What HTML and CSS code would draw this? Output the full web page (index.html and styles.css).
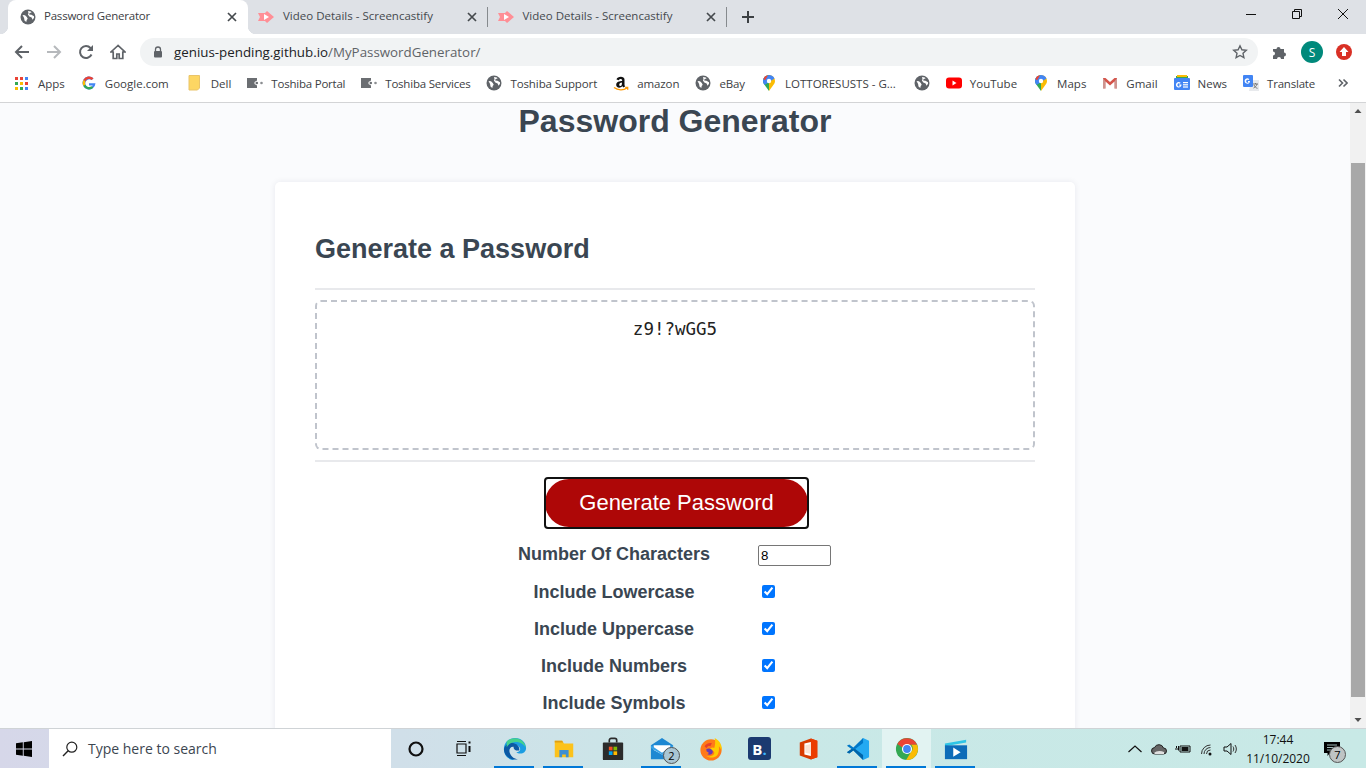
FILE: index.html
```html
<!DOCTYPE html>
<html lang="en">
<head>
<meta charset="utf-8">
<title>Password Generator</title>
<link rel="stylesheet" href="styles.css">
</head>
<body>
<svg class="defs" width="0" height="0">
  <symbol id="globe" viewBox="0 0 16 16"><circle cx="8" cy="8" r="7.5" fill="#5f6368"/><path d="M2.500 6l2.500.3 1.800 1.700.9 1.700-1 1.200-.4 2.200-1.800-1.700-.4-2.400zM8 2l2.800.4.800 1-2 .6-.4 1.400 2.300.4 2.500 1.400v1.500l-1.400 2-1-2.300-2.300-1-1.400-1.800.6-1.400z" fill="#fff"/></symbol>
  <symbol id="cast" viewBox="0 0 16 16"><path d="M0 4h7l2-2 7 6-7 6-2-2H0l2-4z" fill="#ff8f96"/><path d="M6 5l5 3-5 3z" fill="#fff"/></symbol>
  <symbol id="x" viewBox="0 0 10 10"><path d="M1 1l8 8M9 1L1 9" stroke="#45494d" stroke-width="1.700" fill="none"/></symbol>
  <symbol id="tosh" viewBox="0 0 16 16"><path d="M0 3h10v2.500L7.500 7v2l2.500 1.500V13H0z" fill="#6b6e72"/><circle cx="9.800" cy="8" r="1.300" fill="#6b6e72"/><circle cx="14.500" cy="8" r="1.300" fill="#8a8d90"/></symbol>
  <symbol id="pin" viewBox="0 0 16 16"><path d="M8 0a6 6 0 0 0-6 6c0 1.500.6 2.600 1.300 3.600L8 16z" fill="#34a853"/><path d="M8 0a6 6 0 0 1 6 6c0 1.500-.6 2.600-1.300 3.600L8 16z" fill="#fbbc04"/><path d="M8 0a6 6 0 0 1 5.500 3.500L3.500 10A6 6 0 0 1 3.500 2z" fill="#4285f4"/><path d="M3.700 1.800A6 6 0 0 1 7 .2L4.200 5.200 2.400 4z" fill="#ea4335"/><circle cx="8" cy="6" r="2.200" fill="#fff"/></symbol>
</svg>

<div class="screen">
  <header class="chrome">
    <div class="tabstrip">
      <div class="tab active">
        <svg class="ico16"><use href="#globe"/></svg>
        <span class="tab-title">Password Generator</span>
        <svg class="tab-x"><use href="#x"/></svg>
      </div>
      <div class="tab">
        <svg class="ico16"><use href="#cast"/></svg>
        <span class="tab-title">Video Details - Screencastify</span>
        <svg class="tab-x"><use href="#x"/></svg>
      </div>
      <div class="tab">
        <svg class="ico16"><use href="#cast"/></svg>
        <span class="tab-title">Video Details - Screencastify</span>
        <svg class="tab-x"><use href="#x"/></svg>
      </div>
      <svg class="newtab" viewBox="0 0 14 14"><path d="M7 1v12M1 7h12" stroke="#3c4043" stroke-width="2"/></svg>
      <div class="winctl">
        <svg viewBox="0 0 12 12"><path d="M1 6.500h10" stroke="#111" stroke-width="1"/></svg>
        <svg viewBox="0 0 12 12"><path d="M1.500 3.500h7v7h-7zM3.500 3.500v-2h7v7h-2" stroke="#111" stroke-width="1" fill="none"/></svg>
        <svg viewBox="0 0 12 12"><path d="M1 1l10 10M11 1L1 11" stroke="#111" stroke-width="1"/></svg>
      </div>
    </div>
    <div class="toolbar">
      <svg class="nav" viewBox="0 0 16 16"><path d="M15 8H2M8 2L2 8l6 6" stroke="#5f6368" stroke-width="2" fill="none"/></svg>
      <svg class="nav" viewBox="0 0 16 16"><path d="M1 8h13M8 2l6 6-6 6" stroke="#b6b9bc" stroke-width="2" fill="none"/></svg>
      <svg class="nav" viewBox="0 0 16 16"><path d="M13.500 10.500A6 6 0 1 1 12.500 4L14 5.500" stroke="#5f6368" stroke-width="2" fill="none"/><path d="M15 1v6H9z" fill="#5f6368"/></svg>
      <svg class="nav" viewBox="0 0 16 16"><path d="M8 1.500L1 8h2.200v6.500h3.600V10h2.400v4.500h3.600V8H15z" stroke="#5f6368" stroke-width="1.700" fill="none"/></svg>
      <div class="omnibox">
        <svg class="lock" viewBox="0 0 10 12"><path d="M2.500 5V3.500a2.500 2.500 0 0 1 5 0V5" stroke="#5f6368" stroke-width="1.300" fill="none"/><rect x="1" y="5" width="8" height="6.500" rx="1" fill="#5f6368"/></svg>
        <span class="url"><b>genius-pending.github.io</b>/MyPasswordGenerator/</span>
        <svg class="star" viewBox="0 0 16 16"><path d="M8 1.800l1.900 4 4.400.5-3.300 3 .9 4.400L8 11.500l-3.900 2.200.9-4.400-3.300-3 4.400-.5z" stroke="#5f6368" stroke-width="1.400" fill="none"/></svg>
      </div>
      <svg class="ext" viewBox="0 0 16 16"><path d="M1 5h3.500a2 2 0 1 1 4 0H12v3.500a2 2 0 1 1 0 4V15H9a2 2 0 1 0-4 0H1v-3.500a2 2 0 1 0 0-4z" fill="#5f6368"/></svg>
      <span class="avatar">S</span>
      <svg class="upload" viewBox="0 0 16 16"><circle cx="8" cy="8" r="8" fill="#d93025"/><path d="M8 3l4.500 5H10v4H6V8H3.500z" fill="#fff"/></svg>
    </div>
    <nav class="bookmarks">
      <span class="bm bm-apps"><svg class="ico13" viewBox="0 0 13 13"><g fill="#ea4335"><rect width="3" height="3"/><rect x="5" width="3" height="3"/></g><rect x="10" width="3" height="3" fill="#4285f4"/><rect y="5" width="3" height="3" fill="#34a853"/><rect x="5" y="5" width="3" height="3" fill="#fbbc04"/><rect x="10" y="5" width="3" height="3" fill="#ea4335"/><rect y="10" width="3" height="3" fill="#fbbc04"/><rect x="5" y="10" width="3" height="3" fill="#34a853"/><rect x="10" y="10" width="3" height="3" fill="#4285f4"/></svg>Apps</span>
      <span class="bm"><svg class="ico16" viewBox="0 0 16 16"><path d="M14.500 8.200H8v2.400h3.800A4 4 0 1 1 10.700 5l1.800-1.800A6.500 6.500 0 1 0 14.500 8.200z" fill="#4285f4"/><path d="M2.300 5a6.500 6.500 0 0 1 10.200-1.800L10.700 5a4 4 0 0 0-6.300 1.300z" fill="#ea4335"/><path d="M2.300 5l2.100 1.300a4 4 0 0 0 0 3.400L2.300 11a6.500 6.500 0 0 1 0-6z" fill="#fbbc04"/><path d="M2.300 11l2.100-1.300a4 4 0 0 0 6 1.600l2 1.500A6.500 6.500 0 0 1 2.300 11z" fill="#34a853"/></svg>Google.com</span>
      <span class="bm bm-dell"><svg class="ico16" viewBox="0 0 16 16"><path d="M2 .5h10.500v12.500l-2 2H2z" fill="#fdd663" stroke="#e9c46a"/></svg>Dell</span>
      <span class="bm bm-tight"><svg class="ico16"><use href="#tosh"/></svg>Toshiba Portal</span>
      <span class="bm bm-tight"><svg class="ico16"><use href="#tosh"/></svg>Toshiba Services</span>
      <span class="bm bm-snug"><svg class="ico16"><use href="#globe"/></svg>Toshiba Support</span>
      <span class="bm bm-snug"><svg class="ico16" viewBox="0 0 16 16"><path d="M3.500 4.500C4 1 11.500 .5 11.500 4.500v5c0 1 .3 1.300.7 1.700l-1.700 1.300-1-1.200c-2.500 2.300-6.500 1.500-6.300-1.500 0-3 3.300-3.800 6-3.800 .2-2.600-2.800-2.600-3.300-.7zM8.900 7.500c-2.800 0-3.500 3.600-1.500 3.500 1.500 0 1.600-2 1.500-3.500z" fill="#111" fill-rule="evenodd"/><path d="M1 12.500c4 3 9.500 3 13 .5M12.200 12.300h2.500v2.500" stroke="#f90" stroke-width="1.300" fill="none"/></svg>amazon</span>
      <span class="bm bm-snug"><svg class="ico16"><use href="#globe"/></svg>eBay</span>
      <span class="bm"><svg class="ico16"><use href="#pin"/></svg>LOTTORESUSTS - G...</span>
      <span class="bm bm-empty"><svg class="ico16"><use href="#globe"/></svg></span>
      <span class="bm"><svg class="ico16" viewBox="0 0 16 16"><rect y="2.500" width="16" height="11" rx="3" fill="#f00"/><path d="M6.500 5.500l4 2.500-4 2.500z" fill="#fff"/></svg>YouTube</span>
      <span class="bm"><svg class="ico16"><use href="#pin"/></svg>Maps</span>
      <span class="bm"><svg class="ico16" viewBox="0 0 16 16"><path d="M1 3h2.500L8 7l4.500-4H15v10.500h-2.500V6.500L8 10.500l-4.500-4v7H1z" fill="#d5544a"/><path d="M3.500 6.500v7H1V3zM12.500 6.500v7H15V3z" fill="#c8c8c8" opacity=".55"/></svg>Gmail</span>
      <span class="bm"><svg class="ico16" viewBox="0 0 16 16"><path d="M2 1h12v4H2z" fill="#34a853"/><path d="M3 0h10v2H3z" fill="#fbbc04"/><rect y="3" width="16" height="12" rx="1" fill="#4285f4"/><rect x="9" y="7" width="5" height="1.200" fill="#fff"/><rect x="9" y="9.200" width="5" height="1.200" fill="#fff"/><rect x="9" y="11.400" width="5" height="1.200" fill="#fff"/><path d="M7.500 9.500H5.200v1.200h1a1.500 1.500 0 1 1-.4-2l.9-.9a2.800 2.800 0 1 0 .8 1.700z" fill="#fff"/></svg>News</span>
      <span class="bm bm-tight"><svg class="ico16" viewBox="0 0 16 16"><path d="M8 5h8v11H6z" fill="#e8eaed"/><rect width="10" height="12" rx="1" fill="#4285f4"/><path d="M7 6H5v1.200h.8A1.500 1.500 0 1 1 5.500 5l.8-.8A2.700 2.700 0 1 0 7 6z" fill="#fff"/><path d="M10 9h5M12.500 8v1M14 9c-.5 2-2 3.500-3.500 4M11 10c.5 1.500 2 3 3.500 3.300" stroke="#777" fill="none"/></svg>Translate</span>
      <svg class="more" viewBox="0 0 10 10"><path d="M1 1.500L4.500 5 1 8.500M5.500 1.500L9 5 5.500 8.500" stroke="#5f6368" stroke-width="1.600" fill="none"/></svg>
    </nav>
  </header>

  <div class="viewport">
    <main class="page">
      <h1 class="page-title">Password Generator</h1>
      <section class="card">
        <h2 class="card-title">Generate a Password</h2>
        <div class="card-body">
          <textarea class="password" readonly>z9!?wGG5</textarea>
        </div>
        <div class="card-footer">
          <button class="generate" type="button">Generate Password</button>
          <div class="options">
            <label class="opt-label">Number Of Characters</label>
            <input class="opt-number" type="text" value="8">
            <label class="opt-label">Include Lowercase</label>
            <input class="opt-check" type="checkbox" checked>
            <label class="opt-label">Include Uppercase</label>
            <input class="opt-check" type="checkbox" checked>
            <label class="opt-label">Include Numbers</label>
            <input class="opt-check" type="checkbox" checked>
            <label class="opt-label">Include Symbols</label>
            <input class="opt-check" type="checkbox" checked>
          </div>
        </div>
      </section>
    </main>
    <div class="scrollbar">
      <svg class="arrow" viewBox="0 0 16 16"><path d="M4.500 10L8 6l3.500 4z" fill="#505050"/></svg>
      <div class="thumb"></div>
      <svg class="arrow" viewBox="0 0 16 16"><path d="M4.500 6L8 10l3.500-4z" fill="#505050"/></svg>
    </div>
  </div>

  <footer class="taskbar">
    <div class="start"><svg viewBox="0 0 16 16"><path d="M0 2.300L6.800 1.300V7.500H0zM7.700 1.200L16 0V7.500H7.700zM0 8.400H6.800V14.700L0 13.700zM7.700 8.400H16V16L7.700 14.800z" fill="#000"/></svg></div>
    <div class="searchbox">
      <svg viewBox="0 0 16 16"><circle cx="9.800" cy="6.200" r="5" stroke="#222" stroke-width="1.200" fill="none"/><path d="M6.200 9.800L1 15" stroke="#222" stroke-width="1.400"/></svg>
      <span>Type here to search</span>
    </div>
    <div class="tile"><svg class="i18" viewBox="0 0 18 18"><circle cx="9" cy="9" r="6.500" stroke="#111" stroke-width="2.200" fill="none"/></svg></div>
    <div class="tile tile-view"><svg class="i18" viewBox="0 0 18 18"><path d="M3 4h9v9H3zM3 1.500h9M3 15.500h9" stroke="#111" stroke-width="1.200" fill="none"/><path d="M15.500 1.500v2M15.500 6v6" stroke="#111" stroke-width="2"/></svg></div>
    <div class="tile tile-gap run"><svg class="i26" viewBox="0 0 26 26"><path d="M1 13C1 6 6.500 1 13 1c7 0 12 5 12 11 0 4-3 6-6 6-2 0-4-.800-4.500-1.500 3 0 4.500-2 4-4-.800-3-4-4.500-7-4-4 .8-6 4-5.500 8 .5 3 3 7 6.500 8.500C6 25 1 20 1 13z" fill="#1b9de2"/><path d="M1 13C2 8 7 5.500 11 6.500c5 1 7.500 5 6.500 8-3 1-6.500-1-6-4-4-.5-5.500 3.500-4 7 1.500 4 5.500 6.500 9 6.500C9 26 1 21 1 13z" fill="#0c59a4"/><path d="M4 5c4-5 15-5 19 2 1.500 2.500 2 5 2 5-2-4-7-7-12-6.500C9 6 6 7.500 4 11z" fill="#45d18d"/></svg></div>
    <div class="tile run"><svg class="i26" viewBox="0 0 26 26"><path d="M3 4h8l2 3h10v15H3z" fill="#fcc21b"/><path d="M3 4h8l1 2H3z" fill="#e09f13"/><path d="M8 14h10v8h-3v-3h-4v3H8z" fill="#3f8fd2"/></svg></div>
    <div class="tile"><svg class="i26" viewBox="0 0 26 26"><path d="M9 6V3.500C9 2 10 1.500 11 1.500h4c1 0 2 .5 2 2V6" stroke="#2b2b2b" stroke-width="1.800" fill="none"/><rect x="2" y="6" width="22" height="19" rx="1" fill="#2b2b2b"/><rect x="8.500" y="10.500" width="4" height="4" fill="#f25022"/><rect x="13.500" y="10.500" width="4" height="4" fill="#7fba00"/><rect x="8.500" y="15.500" width="4" height="4" fill="#00a4ef"/><rect x="13.500" y="15.500" width="4" height="4" fill="#ffb900"/></svg></div>
    <div class="tile run"><svg class="i26" viewBox="0 0 26 26"><path d="M1 9L13 1l12 8v15H1z" fill="#1e88d2"/><path d="M4 9h18v5l-9 5-9-5z" fill="#fff"/><path d="M1 9l12 8 12-8v3l-12 7-12-7z" fill="#37a2e6"/></svg><span class="badge">2</span></div>
    <div class="tile"><svg class="i26" viewBox="0 0 26 26"><circle cx="13" cy="14" r="11.500" fill="#ff7a18"/><path d="M17 1c6 3 8.500 9 7.500 14-1-3-3-5-3-5s1 7-2 10-9 3-12 0c3 2 8 1 9-2s-3-4-5-4c1-3 4-3 5-2 1-3 1.500-7 .5-11z" fill="#ffcb00"/><path d="M6 10c2-3 6-4 8-3-1 1-1.500 2-1.500 3-2-.5-3.500 0-4 2-1-.5-2-1-2.500-2z" fill="#e8402a"/><path d="M8 13c3-1.500 7 0 7 3s-4 4-6 2.500c2 0 2-2 0-2.500-1-.3-1-1.500-1-3z" fill="#6a3ab0"/></svg></div>
    <div class="tile"><span class="booking">B<i>.</i></span></div>
    <div class="tile"><svg class="i26" viewBox="0 0 26 26"><path d="M3 6L15 1.500 22 4v18l-7 2.500L3 20z" fill="#d83b01"/><path d="M15 1.500L22 4v18l-7 2.500z" fill="#eb3c00"/><path d="M8 7l7-1.500v15L8 19z" fill="#fff"/><path d="M9 9l6-1.500v11L9 17z" fill="#fbe3d6"/></svg></div>
    <div class="tile run"><svg class="i26" viewBox="0 0 26 26"><path d="M18.500 1L25 4v18l-6.500 3L8 14.500z" fill="#23a9f2"/><path d="M18.500 1L8 11.500 3.500 8 1 9.500 6 13l-5 3.500L3.500 18 18.500 6.500z" fill="#0078c8"/><path d="M1 16.500L3.500 18 8 14.500 18.500 25V19.500L10 13 6 13z" fill="#0065a9"/></svg></div>
    <div class="tile run tile-active"><svg class="i26" viewBox="0 0 26 26"><circle cx="13" cy="13" r="12" fill="#34a853"/><path d="M2.500 7.500A12 12 0 0 1 24 8.500H13a5 5 0 0 0-5 3z" fill="#ea4335"/><path d="M24 8.500A12 12 0 0 1 12 25l5.500-9a5 5 0 0 0 0-7.500z" fill="#fbbc04"/><circle cx="13" cy="13" r="5.500" fill="#fff"/><circle cx="13" cy="13" r="4.200" fill="#4285f4"/></svg></div>
    <div class="tile run"><svg class="i26" viewBox="0 0 26 26"><path d="M1 7l23-4v3L1 10z" fill="#2ec5e6"/><path d="M1 9h24v15H1z" fill="#0d6cb8"/><path d="M10 11.500l8 5-8 5z" fill="#fff"/></svg></div>
    <div class="tray">
      <svg class="t16" viewBox="0 0 16 16"><path d="M1.500 11L8 5l6.500 6" stroke="#111" stroke-width="1.200" fill="none"/></svg>
      <svg class="t16" viewBox="0 0 16 16"><path d="M4 13a3.200 3.200 0 0 1-.5-6.400A4.800 4.800 0 0 1 12.500 7 3 3 0 0 1 12.500 13z" fill="#666" stroke="#222"/><path d="M3 12c2-2 6-3 10-1v2H4z" fill="#e0e0e0"/></svg>
      <svg class="t16" viewBox="0 0 16 16"><path d="M5 5h10v6H5zM0 8h3M1.500 5v2M3.500 5v2" stroke="#111" fill="none"/><rect x="3" y="6.500" width="1" height="3" fill="#111"/><rect x="6.500" y="6" width="7" height="4" fill="#111"/></svg>
      <svg class="t16" viewBox="0 0 16 16"><circle cx="11" cy="13" r="1.500" fill="#111"/><path d="M7.500 13a4 4 0 0 1 4-4M5 13a6.500 6.500 0 0 1 6.500-6.500M2.500 13a9 9 0 0 1 9-9" stroke="#333" fill="none"/></svg>
      <svg class="t16" viewBox="0 0 16 16"><path d="M1 6h3l4-3.500v11L4 10H1z" stroke="#111" fill="none"/><path d="M10 5.500c1 1.500 1 3.500 0 5M12 4c1.800 2.500 1.800 5.500 0 8" stroke="#333" fill="none"/></svg>
    </div>
    <div class="clock"><span>17:44</span><span>11/10/2020</span></div>
    <div class="notify"><svg viewBox="0 0 16 16"><path d="M0 1h16v11H6l-2.500 3v-3H0z" fill="#000"/><path d="M3 4h10M3 6.500h10M3 9h7" stroke="#c9e9e6" stroke-width=".8"/></svg><span class="badge badge-grey">7</span></div>
  </footer>
</div>
</body>
</html>
```

FILE: styles.css
```css
* { box-sizing: border-box; }
html, body { margin: 0; height: 100%; overflow: hidden; }
body { font-family: "Liberation Sans", Arial, sans-serif; }
.defs { position: absolute; }
.screen { width: 1366px; height: 768px; display: flex; flex-direction: column; }

/* browser frame */
.chrome { flex: none; height: 103px; display: flex; flex-direction: column; background: #fff; border-bottom: 1px solid #d3d4d6; font-family: "Open Sans", "Noto Sans", sans-serif; }
.tabstrip { height: 34px; background: #dee1e6; display: flex; align-items: center; padding-left: 8px; }
.tab { position: relative; width: 239.500px; height: 34px; display: flex; align-items: center; padding: 0 10px 0 12px; gap: 8px; }
.tab + .tab::before { content: ""; position: absolute; right: 0; top: 7px; height: 20px; width: 1px; background: #868a8e; }
.tab.active { background: #fff; border-radius: 8px 8px 0 0; width: 240px; }
.tab.active::before, .tab.active::after { content: ""; position: absolute; bottom: 0; width: 8px; height: 8px; }
.tab.active::before { left: -8px; background: radial-gradient(circle at 0 0, #dee1e6 8px, #fff 8.500px); }
.tab.active::after { right: -8px; background: radial-gradient(circle at 100% 0, #dee1e6 8px, #fff 8.500px); z-index: 1; }
.tab-title { flex: 1; font-size: 11.500px; line-height: 14px; margin-bottom: 2px; color: #3c4043; white-space: nowrap; overflow: hidden; }
.tab.active .tab-title { letter-spacing: -.22px; }
.tab:not(.active) { padding-left: 10px; padding-right: 10px; }
.tab:not(.active) .tab-title { color: #45494e; padding-left: 1px; }
.ico16 { width: 16px; height: 16px; flex: none; }
.ico13 { width: 13px; height: 13px; flex: none; }
.tab-x { width: 10px; height: 10px; flex: none; margin-right: 1px; }
.newtab { width: 14px; height: 14px; margin-left: 14px; }
.winctl { margin-left: auto; display: flex; align-items: center; margin-top: -6px; }
.winctl svg { width: 12px; height: 12px; margin: 0 17px; display: block; }

.toolbar { height: 32px; display: flex; align-items: center; padding-left: 14px; }
.nav { width: 16px; height: 16px; margin: 4px 16px 0 0; flex: none; }
.omnibox { margin: 8px 0 4px -2px; width: 1118px; height: 28px; border-radius: 14px; background: #f1f3f4; display: flex; align-items: center; padding: 0 10px 0 13px; }
.lock { width: 10px; height: 12px; flex: none; margin-right: 11px; }
.url { flex: 1; font-size: 13.330px; color: #5f6368; white-space: nowrap; }
.url b { font-weight: 400; color: #202124; }
.star { width: 16px; height: 16px; flex: none; }
.ext { width: 16px; height: 16px; margin: 4px 0 0 14px; flex: none; }
.avatar { width: 22px; height: 22px; border-radius: 50%; background: #00897b; color: #fff; font-size: 12px; margin: 4px 0 0 13px; display: flex; align-items: center; justify-content: center; flex: none; }
.upload { width: 16px; height: 16px; margin: 4px 0 0 13px; flex: none; }

.bookmarks { flex: 1; display: flex; align-items: center; padding: 0 0 2px 15px; gap: 16px; font-size: 11.500px; color: #3c4043; white-space: nowrap; }
.bm { display: flex; align-items: center; gap: 8px; }
.bm-apps { gap: 10px; }
.bm-dell { margin-left: 2px; }
.bm-tight { letter-spacing: -.22px; }
.bm-snug { letter-spacing: -.1px; }
.bm-empty { margin-left: 2px; }
.more { width: 10px; height: 10px; margin-left: auto; margin-right: 18px; flex: none; }

/* page */
.viewport { flex: 1; min-height: 0; display: flex; overflow: hidden; background: #fafbfd; }
.page { flex: 1; min-width: 0; overflow: hidden; display: flex; flex-direction: column; align-items: center; color: #3a4652; }
.page-title { margin: 0; flex: none; height: 79px; line-height: 36px; font-size: 32px; font-weight: 700; text-align: center; }
.card { flex: none; width: 800px; background: #fff; border-radius: 5px; box-shadow: 0 0 6px rgba(0, 0, 60, .08); padding: 50px 40px 40px; }
.card-title { margin: 0; padding-top: 1px; font-size: 27px; line-height: 32px; height: 58px; border-bottom: 2px solid #e8e9ec; }
.card-body { padding: 10px 0; border-bottom: 2px solid #e8e9ec; height: 172px; }
.password { display: block; width: 100%; height: 150px; border: 2px dashed #c0c4cc; border-radius: 6px; padding: 16px 18px; resize: none; outline: none; overflow: hidden; text-align: center; font-family: "DejaVu Sans Mono", monospace; font-size: 17.500px; line-height: 22px; color: #222; background: #fff; }
.card-footer { display: flex; flex-direction: column; align-items: center; padding-top: 15px; }
.generate { width: 265px; height: 52px; padding: 0 0 0 1px; border: 0; outline: 2px solid #111; outline-offset: -2px; background: #fff; border-radius: 4px; position: relative; font-family: inherit; font-size: 22px; color: #fff; z-index: 0; margin-left: 2px; }
.generate::before { content: ""; position: absolute; inset: 2px 1px; border-radius: 26px; background: #ae0707; z-index: -1; }
.options { align-self: flex-start; margin: 7px 0 0 179px; display: grid; grid-template-columns: 240px 73px; grid-template-rows: 38px repeat(4, 37px); column-gap: 24px; }
.opt-label { font-size: 18px; font-weight: 700; text-align: center; line-height: 37px; }
.opt-number { width: 73px; height: 21px; align-self: center; border: 1px solid #767676; border-radius: 2px; padding: 1px 2px; font-family: "Liberation Sans", sans-serif; font-size: 13.300px; color: #000; background: #fff; }
.opt-check { width: 13px; height: 13px; margin: 0 0 2px 4px; align-self: center; accent-color: #0075ff; }

.scrollbar { flex: none; width: 16px; background: #f1f1f1; display: flex; flex-direction: column; }
.arrow { width: 16px; height: 16px; flex: none; }
.thumb { width: 14px; height: 534px; margin: 44px 1px 15px; background: #a8a8a8; flex: none; }

/* taskbar */
.taskbar { flex: none; height: 40px; display: flex; align-items: stretch; border-top: 1px solid #cfd3d6; background: linear-gradient(90deg, #d6d7e9 0, #d0dfe9 400px, #c9e8e7 750px, #c8e9e6 1366px); font-family: "Open Sans", "Noto Sans", sans-serif; }
.start { width: 48px; display: flex; align-items: center; justify-content: center; }
.start svg { width: 16px; height: 16px; }
.searchbox { width: 342px; margin-left: 1px; background: #fff; display: flex; align-items: center; gap: 10px; padding-left: 13px; font-size: 14px; color: #3c4650; }
.searchbox svg { width: 16px; height: 16px; flex: none; }
.tile { width: 49px; position: relative; display: flex; align-items: center; justify-content: center; flex: none; }
.tile-view { padding-right: 4px; }
.tile-gap { margin-left: 1px; }
.run::after { content: ""; position: absolute; left: 4px; right: 5px; bottom: 0; height: 2px; background: #0078d7; }
.tile-active { background: #e2f3f2; }
.i18 { width: 18px; height: 18px; }
.i26 { width: 24px; height: 24px; }
.badge { position: absolute; right: 6px; bottom: 4px; width: 17px; height: 17px; border-radius: 50%; background: #a9c6d4; border: 1px solid #555; font-size: 11px; color: #000; display: flex; align-items: center; justify-content: center; }
.badge-grey { right: -6px; bottom: -6px; background: #bfc4c4; }
.booking { width: 23px; height: 23px; border-radius: 3px; background: #1b3a70; color: #fff; font-weight: 700; font-size: 15px; display: flex; align-items: center; justify-content: center; }
.booking i { font-style: normal; color: #3db4ff; }
.tray { margin-left: 8px; display: flex; align-items: center; gap: 8px; padding-left: 139px; }
.t16 { width: 16px; height: 16px; }
.clock { width: 70px; margin-left: 4px; display: flex; flex-direction: column; align-items: center; justify-content: center; font-size: 12px; line-height: 19px; color: #111; }
.notify { position: relative; width: 16px; height: 16px; align-self: center; margin-left: 11px; }
.notify svg { width: 16px; height: 16px; display: block; }
```
